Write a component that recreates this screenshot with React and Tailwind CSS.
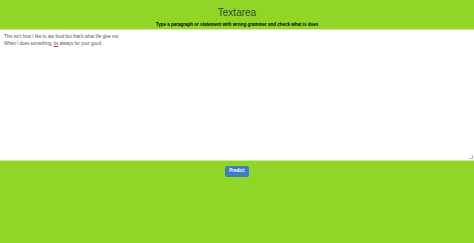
export default function App() {
  return (
    <div className="min-h-[243px] bg-[#8fd627] flex flex-col" style={{ fontFamily: '"Liberation Sans", Arial, sans-serif' }}>
      <div className="flex flex-col items-center pt-[6px]">
        <h1 className="text-[10px] leading-[13px] text-[#2f4f12]">Textarea</h1>
        <p className="text-[4.5px] leading-[6px] font-bold text-black mt-[3px]">
          Type a paragraph or statement with wrong grammer and check what is does
        </p>
      </div>
      <div className="mt-[1px] h-[132px] bg-white border-y border-[#cfe8a8] px-[4px] pt-[3px] relative">
        <p className="text-[4.5px] leading-[7px] text-[#555]">This isn't how I like to ate food but that's what life give me</p>
        <p className="text-[4.5px] leading-[7px] text-[#555]">
          When I does something, <span className="underline decoration-[#d33]">its</span> always for your good
        </p>
        <div className="absolute right-[1px] bottom-[1px] w-[4px] h-[4px] border-r border-b border-[#bbb]" />
      </div>
      <div className="flex justify-center pt-[5px]">
        <button className="bg-[#3b7dc8] text-white text-[4.5px] font-bold px-[4px] h-[11px] rounded-[2px]">Predict</button>
      </div>
    </div>
  );
}
